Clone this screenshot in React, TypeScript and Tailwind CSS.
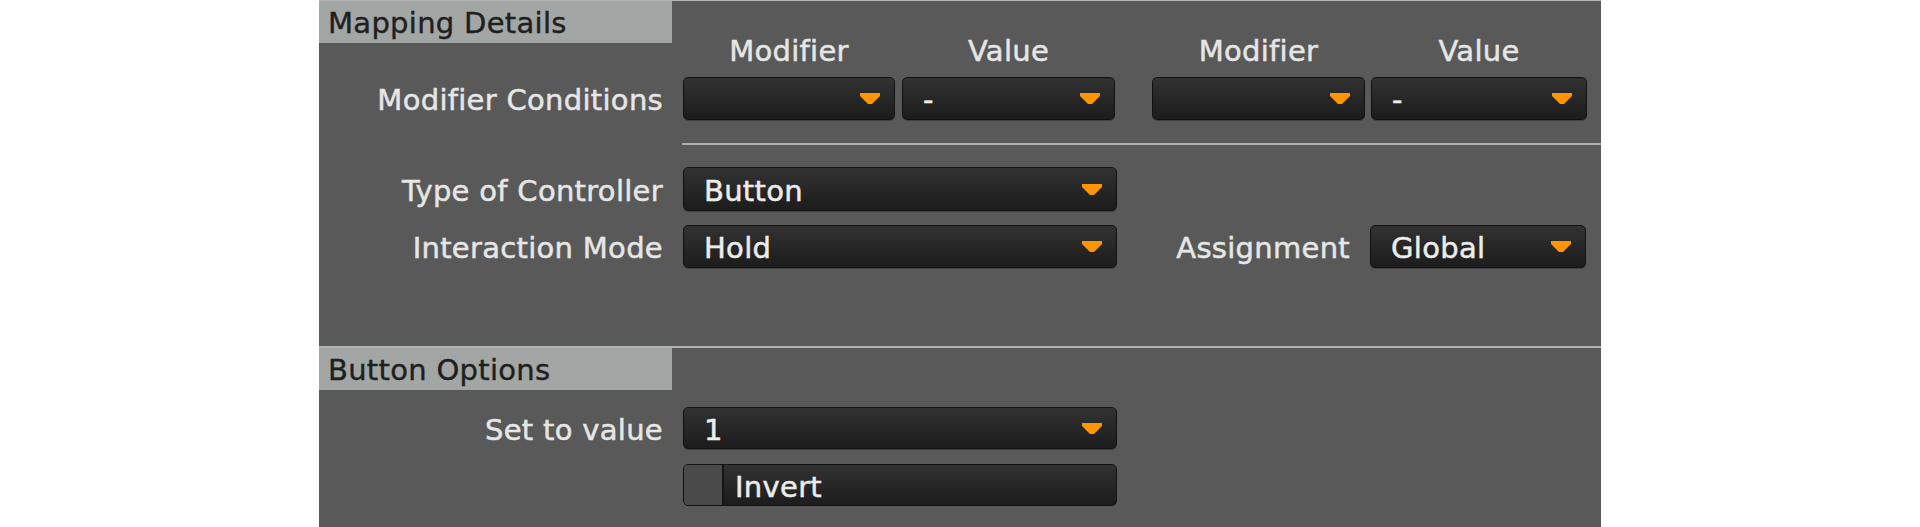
import React from "react";

function Arrow() {
  return (
    <svg width="20" height="11" viewBox="0 0 20 11" className="shrink-0">
      <path d="M0 0H20V3L12 11H8L0 3Z" fill="#ff9500" />
    </svg>
  );
}

function Dropdown({ w, text }: { w: string; text: string }) {
  return (
    <div
      className={`${w} h-full flex items-center justify-between pl-[20px] pr-[14px] rounded-[5px] border border-[#121212] bg-linear-to-b from-[#323232] to-[#1c1c1c] text-[#ececec] shadow-[0_1px_0_rgba(0,0,0,0.25)]`}
    >
      <span className="leading-none translate-y-[2px] [-webkit-text-stroke:0.5px_#ececec]">{text}</span>
      <Arrow />
    </div>
  );
}

function Label({ children }: { children: React.ReactNode }) {
  return (
    <div className="w-[364px] shrink-0 flex items-center justify-end pr-[20px] text-[#e6e6e6] leading-none">
      <span className="translate-y-[2px] [-webkit-text-stroke:0.5px_#e6e6e6]">{children}</span>
    </div>
  );
}

function Tab({ children }: { children: React.ReactNode }) {
  return (
    <div className="w-[353px] h-[42px] bg-[#a2a6a5] flex items-center pl-[9px] text-[#1f1f1f] leading-none">
      <span className="translate-y-[1px] [-webkit-text-stroke:0.4px_#1f1f1f]">{children}</span>
    </div>
  );
}

export default function App() {
  return (
    <div className="w-full h-[527px] bg-white flex justify-center font-['DejaVu_Sans',sans-serif] text-[29px] tracking-[0.3px]">
      <div className="w-[1282px] h-full bg-[#585958] flex flex-col">
        {/* Section 1 */}
        <section className="h-[346px] border-t border-[#b4b6b5] flex flex-col">
          <div className="flex h-[76px]">
            <div className="w-[364px] shrink-0">
              <Tab>Mapping Details</Tab>
            </div>
            <div className="flex items-end pb-[9px] text-[#e6e6e6] leading-[34px] [-webkit-text-stroke:0.5px_#e6e6e6]">
              <div className="w-[212px] text-center">Modifier</div>
              <div className="w-[213px] ml-[7px] text-center">Value</div>
              <div className="w-[213px] ml-[37px] text-center">Modifier</div>
              <div className="w-[216px] ml-[6px] text-center">Value</div>
            </div>
          </div>
          <div className="flex h-[43px]">
            <Label>Modifier Conditions</Label>
            <div className="flex h-full">
              <Dropdown w="w-[212px]" text="" />
              <div className="ml-[7px] h-full">
                <Dropdown w="w-[213px]" text="-" />
              </div>
              <div className="ml-[37px] h-full">
                <Dropdown w="w-[213px]" text="" />
              </div>
              <div className="ml-[6px] h-full">
                <Dropdown w="w-[216px]" text="-" />
              </div>
            </div>
          </div>
          <div className="mt-[23px] ml-[363px] h-[2px] bg-[#b0b2b1]" />
          <div className="flex h-[44px] mt-[22px]">
            <Label>Type of Controller</Label>
            <Dropdown w="w-[434px]" text="Button" />
          </div>
          <div className="flex h-[43px] mt-[14px]">
            <Label>Interaction Mode</Label>
            <Dropdown w="w-[434px]" text="Hold" />
            <div className="flex-1 flex items-center justify-end pr-[20px] text-[#e6e6e6] leading-none">
              <span className="translate-y-[2px] [-webkit-text-stroke:0.5px_#e6e6e6]">Assignment</span>
            </div>
            <Dropdown w="w-[216px]" text="Global" />
            <div className="w-[15px] shrink-0" />
          </div>
        </section>

        {/* Section 2 */}
        <section className="flex-1 border-t-2 border-[#b0b2b1] flex flex-col">
          <Tab>Button Options</Tab>
          <div className="flex h-[42px] mt-[17px]">
            <Label>Set to value</Label>
            <Dropdown w="w-[434px]" text="1" />
          </div>
          <div className="flex h-[42px] mt-[15px]">
            <div className="w-[364px] shrink-0" />
            <div className="w-[434px] h-full flex rounded-[5px] border border-[#121212] bg-linear-to-b from-[#323232] to-[#1c1c1c] overflow-hidden">
              <div className="w-[40px] h-full bg-[#4a4a4a] border-r-2 border-[#151515] shrink-0" />
              <div className="flex items-center pl-[11px] text-[#ececec] leading-none">
                <span className="translate-y-[2px] [-webkit-text-stroke:0.5px_#ececec]">Invert</span>
              </div>
            </div>
          </div>
        </section>
      </div>
    </div>
  );
}
